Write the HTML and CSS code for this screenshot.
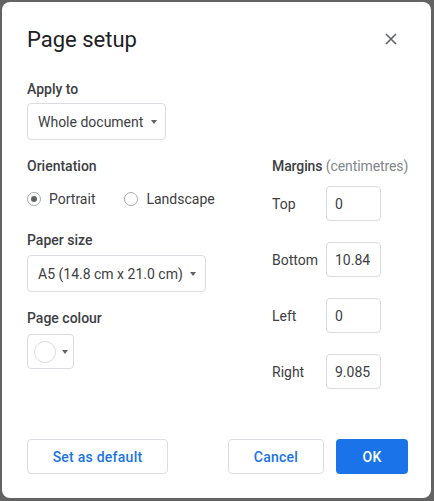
FILE: index.html
```html
<!DOCTYPE html>
<html lang="en">
<head>
<meta charset="utf-8">
<title>Page setup</title>
<link rel="stylesheet" href="styles.css">
</head>
<body>
<div class="dialog">
  <div class="header">
    <div class="title">Page setup</div>
    <svg class="close" width="12" height="12" viewBox="0 0 12 12"><path d="M1 1L11 11M11 1L1 11" stroke="#5f6368" stroke-width="1.6" fill="none"/></svg>
  </div>

  <div class="label apply-label">Apply to</div>
  <div class="select apply-select"><span>Whole document</span><span class="caret"></span></div>

  <div class="columns">
    <div class="col-left">
      <div class="label">Orientation</div>
      <div class="radios">
        <div class="radio-item"><span class="radio checked"></span><span>Portrait</span></div>
        <div class="radio-item"><span class="radio"></span><span>Landscape</span></div>
      </div>
      <div class="label paper-label">Paper size</div>
      <div class="select paper-select"><span>A5 (14.8 cm x 21.0 cm)</span><span class="caret"></span></div>
      <div class="label colour-label">Page colour</div>
      <div class="colour-btn"><span class="swatch"></span><span class="caret"></span></div>
    </div>
    <div class="col-right">
      <div class="label margins-label">Margins <span class="unit">(centimetres)</span></div>
      <div class="margin-rows">
        <div class="margin-row"><span class="mlabel">Top</span><span class="minput">0</span></div>
        <div class="margin-row"><span class="mlabel">Bottom</span><span class="minput">10.84</span></div>
        <div class="margin-row"><span class="mlabel">Left</span><span class="minput">0</span></div>
        <div class="margin-row"><span class="mlabel">Right</span><span class="minput">9.085</span></div>
      </div>
    </div>
  </div>

  <div class="footer">
    <button class="btn btn-default">Set as default</button>
    <div class="footer-right">
      <button class="btn btn-cancel">Cancel</button>
      <button class="btn btn-ok">OK</button>
    </div>
  </div>
</div>
</body>
</html>
```

FILE: styles.css
```css
html, body {
  margin: 0;
  padding: 0;
}
body {
  background: #636363;
  width: 434px;
  height: 501px;
  overflow: hidden;
  font-family: Roboto, "Liberation Sans", Arial, sans-serif;
  color: #3c4043;
}
.dialog {
  margin: 2px 0 0 2px;
  width: 429px;
  height: 496px;
  box-sizing: border-box;
  background: #fff;
  border-radius: 8px;
  padding: 24px 23px 24px 25px;
  display: flex;
  flex-direction: column;
}
.header {
  display: flex;
  justify-content: space-between;
  align-items: flex-start;
  height: 28px;
}
.title {
  font-size: 22px;
  line-height: 28px;
  color: #202124;
  font-weight: 400;
}
.close {
  margin-top: 7px;
  margin-right: 11px;
}
.label {
  font-size: 14px;
  line-height: 20px;
  font-weight: 500;
  color: #3c4043;
}
.apply-label {
  margin-top: 25px;
}
.select {
  display: inline-flex;
  align-items: center;
  align-self: flex-start;
  box-sizing: border-box;
  height: 37px;
  border: 1px solid #dadce0;
  border-radius: 4px;
  padding: 0 8px 0 10px;
  gap: 8px;
  font-size: 14px;
  color: #3c4043;
}
.apply-select {
  margin-top: 4px;
}
.caret {
  width: 0;
  height: 0;
  border-left: 3.5px solid transparent;
  border-right: 3.5px solid transparent;
  border-top: 4px solid #5f6368;
}
.columns {
  display: grid;
  grid-template-columns: 245px 1fr;
  margin-top: 16px;
}
.col-left {
  display: flex;
  flex-direction: column;
  align-items: flex-start;
}
.radios {
  display: flex;
  gap: 29px;
  margin-top: 13px;
  font-size: 14px;
  line-height: 20px;
}
.radio-item {
  display: flex;
  align-items: center;
  gap: 8px;
}
.radio {
  width: 14px;
  height: 14px;
  box-sizing: border-box;
  border: 1px solid #a8acb0;
  border-radius: 50%;
  display: flex;
  align-items: center;
  justify-content: center;
}
.radio.checked::after {
  content: "";
  width: 6px;
  height: 6px;
  border-radius: 50%;
  background: #5f6368;
}
.paper-label {
  margin-top: 21px;
}
.paper-select {
  margin-top: 5px;
  padding-right: 9px;
  gap: 7px;
}
.colour-label {
  margin-top: 16px;
}
.colour-btn {
  margin-top: 6px;
  height: 35px;
  box-sizing: border-box;
  border: 1px solid #dadce0;
  border-radius: 4px;
  display: flex;
  align-items: center;
  gap: 6px;
  padding: 0 5px 0 6px;
}
.swatch {
  width: 22px;
  height: 22px;
  box-sizing: border-box;
  border: 1px solid #dadce0;
  border-radius: 50%;
  background: #fff;
}
.margins-label {
  white-space: nowrap;
  letter-spacing: -0.1px;
}
.unit {
  font-weight: 400;
  color: #80868b;
}
.margin-rows {
  display: flex;
  flex-direction: column;
  gap: 21px;
  margin-top: 10px;
}
.margin-row {
  display: grid;
  grid-template-columns: 54px 55px;
  align-items: center;
  font-size: 14px;
  line-height: 20px;
}
.minput {
  height: 35px;
  box-sizing: border-box;
  border: 1px solid #dadce0;
  border-radius: 4px;
  padding: 0 0 0 8px;
  display: flex;
  align-items: center;
  color: #3c4043;
}
.footer {
  margin-top: auto;
  display: flex;
  justify-content: space-between;
}
.footer-right {
  display: flex;
  gap: 12px;
}
.btn {
  height: 35px;
  box-sizing: border-box;
  border-radius: 4px;
  font-family: Roboto, "Liberation Sans", Arial, sans-serif;
  font-size: 14px;
  font-weight: 500;
  letter-spacing: 0.25px;
  padding: 0;
  cursor: pointer;
}
.btn-default {
  width: 141px;
  border: 1px solid #dadce0;
  background: #fff;
  color: #1a73e8;
}
.btn-cancel {
  width: 96px;
  border: 1px solid #dadce0;
  background: #fff;
  color: #1a73e8;
}
.btn-ok {
  width: 72px;
  border: none;
  background: #1a73e8;
  color: #fff;
}
```
